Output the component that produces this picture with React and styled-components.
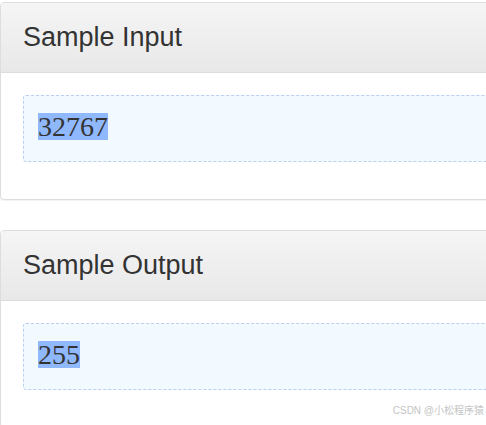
import React from "react";
import styled, { createGlobalStyle } from "styled-components";

const Global = createGlobalStyle`
  html, body { margin: 0; padding: 0; background: #fff; }
  body { overflow: hidden; width: 486px; height: 425px; position: relative; }
`;

const Page = styled.div`
  padding-top: 2px;
  width: 640px;
`;

const Panel = styled.div`
  border: 1px solid #dddddd;
  border-radius: 4px;
  background: #fff;
  box-shadow: 0 1px 1px rgba(0, 0, 0, 0.05);
  margin-bottom: 30px;
  overflow: hidden;
`;

const Heading = styled.div`
  padding: 19px 22px;
  background: linear-gradient(to bottom, #f5f5f5 0%, #e8e8e8 100%);
  border-bottom: 1px solid #dddddd;
`;

const Title = styled.h3`
  margin: 0;
  font-family: "Liberation Sans", Arial, sans-serif;
  font-size: 27px;
  font-weight: 400;
  line-height: 31px;
  color: #333333;
`;

const Body = styled.div`
  padding: 22px 22px 22px 22px;
`;

const Sample = styled.pre`
  margin: 0 0 15px 0;
  padding: 17px 14px 21px 14px;
  background: #f3faff;
  border: 1px dashed #bccff0;
  border-radius: 3px;
  font-family: "Liberation Serif", "Times New Roman", serif;
  font-size: 28px;
  line-height: 27px;
  color: #333333;
`;

const Selected = styled.span`
  display: inline-block;
  height: 27px;
  line-height: 27px;
  background: #90b8fd;
  vertical-align: top;
`;

const Watermark = styled.div`
  position: absolute;
  right: 2px;
  top: 405px;
  font-family: "Liberation Sans", "Noto Sans CJK SC", sans-serif;
  font-size: 10px;
  line-height: 12px;
  color: #c4c4c4;
  white-space: nowrap;
`;

const samples = [
  { title: "Sample Input", value: "32767" },
  { title: "Sample Output", value: "255" },
];

export default function App() {
  return (
    <>
      <Global />
      <Page>
        {samples.map((s) => (
          <Panel key={s.title}>
            <Heading>
              <Title>{s.title}</Title>
            </Heading>
            <Body>
              <Sample>
                <Selected>{s.value}</Selected>
              </Sample>
            </Body>
          </Panel>
        ))}
      </Page>
      <Watermark>CSDN @小松程序猿</Watermark>
    </>
  );
}
